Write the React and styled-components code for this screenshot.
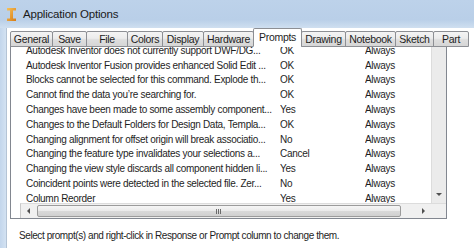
import React from 'react';
import styled, { createGlobalStyle } from 'styled-components';

const GlobalStyle = createGlobalStyle`
  html, body {
    margin: 0;
    padding: 0;
    background: #fff;
  }
`;

const Window = styled.div`
  width: 474px;
  height: 248px;
  overflow: hidden;
  display: flex;
  flex-direction: column;
  background: #fff;
  font-family: "Liberation Sans", Arial, sans-serif;
  color: #1e1e1e;
`;

const TitleBar = styled.div`
  flex: none;
  height: 28px;
  display: flex;
  align-items: center;
  gap: 7px;
  padding-left: 7px;
  background: linear-gradient(#bdd2ea, #b9cfe8 70%, #cfdff0);
  font-size: 11.5px;
  letter-spacing: -0.2px;
  color: #1a1a1a;
`;

const Body = styled.div`
  flex: 1;
  display: flex;
  min-height: 0;
`;

const Frame = styled.div`
  flex: none;
  width: 6px;
  background: linear-gradient(90deg, #c3d6ec, #d3e2f2);
  border-right: 1px solid #b4c4d6;
`;

const Content = styled.div`
  flex: 1;
  display: flex;
  flex-direction: column;
  padding: 1px 5px 0 3px;
  background: #fff;
  font-size: 10px;
  letter-spacing: -0.3px;
`;

const TabStrip = styled.div`
  display: flex;
  align-items: flex-end;
  height: 18px;
  position: relative;
  z-index: 1;
  margin-bottom: -1px;
`;

const Tab = styled.div`
  width: ${p => p.$w}px;
  height: ${p => (p.$active ? 19 : 16)}px;
  box-sizing: border-box;
  margin-right: -1px;
  display: flex;
  align-items: center;
  justify-content: center;
  border: 1px solid #8d8f94;
  border-bottom: ${p => (p.$active ? '1px solid #fff' : '1px solid #8d8f94')};
  border-radius: 2px 2px 0 0;
  background: ${p =>
    p.$active ? '#fff' : 'linear-gradient(#f4f4f4, #ececec 45%, #dedede 55%, #d6d6d6)'};
  padding-bottom: ${p => (p.$active ? 2 : 0)}px;
  font-size: 10.5px;
  white-space: nowrap;
`;

const ListBox = styled.div`
  display: grid;
  grid-template-columns: 1fr 15px;
  grid-template-rows: 156px 15px;
  width: 437px;
  box-sizing: border-box;
  border: 1px solid #828790;
  background: #fff;
`;

const Viewport = styled.div`
  overflow: hidden;
`;

const Rows = styled.div`
  margin-top: -4px;
`;

const Row = styled.div`
  display: grid;
  grid-template-columns: 269px 85px 1fr;
  height: 14.8px;
  align-items: center;
  white-space: nowrap;
`;

const Cell = styled.span`
  overflow: hidden;
  padding-left: ${p => p.$pad || 0}px;
`;

const VScroll = styled.div`
  display: flex;
  flex-direction: column;
  justify-content: flex-end;
  align-items: center;
  background: #ebebeb;
  border-left: 1px solid #dcdcdc;
  padding-bottom: 5px;
`;

const HScroll = styled.div`
  margin-left: 9px;
  display: flex;
  align-items: center;
  border-top: 1px solid #dcdcdc;
  border-left: 1px solid #c8c8c8;
  background: #f0f0f0;
`;

const ArrowButton = styled.div`
  flex: none;
  width: 15px;
  display: flex;
  align-items: center;
  justify-content: center;
`;

const Track = styled.div`
  flex: 1;
  display: flex;
  align-items: center;
`;

const Thumb = styled.div`
  width: 364px;
  height: 12px;
  margin-left: 1px;
  box-sizing: border-box;
  border: 1px solid #9b9b9b;
  border-radius: 2px;
  background: linear-gradient(#f6f6f6, #e9e9e9 50%, #d9d9d9 51%, #d0d0d0);
  display: flex;
  align-items: center;
  justify-content: center;
`;

const Corner = styled.div`
  background: #f0f0f0;
  border-top: 1px solid #dcdcdc;
`;

const Status = styled.div`
  margin: 11px 0 0 9px;
  font-size: 10px;
  letter-spacing: -0.42px;
  white-space: nowrap;
`;

const tabs = [
  ['General', 43],
  ['Save', 35],
  ['File', 42],
  ['Colors', 36],
  ['Display', 42],
  ['Hardware', 51],
  ['Prompts', 49],
  ['Drawing', 45],
  ['Notebook', 51],
  ['Sketch', 39],
  ['Part', 36],
];

const rows = [
  ['Autodesk Inventor does not currently support DWF/DG...', 'OK'],
  ['Autodesk Inventor Fusion provides enhanced Solid Edit ...', 'OK'],
  ['Blocks cannot be selected for this command. Explode th...', 'OK'],
  ['Cannot find the data you\u2019re searching for.', 'OK'],
  ['Changes have been made to some assembly component...', 'Yes'],
  ['Changes to the Default Folders for Design Data, Templa...', 'OK'],
  ['Changing alignment for offset origin will break associatio...', 'No'],
  ['Changing the feature type invalidates your selections a...', 'Cancel'],
  ['Changing the view style discards all component hidden li...', 'Yes'],
  ['Coincident points were detected in the selected file. Zer...', 'No'],
  ['Column Reorder', 'Yes'],
];

function AppIcon() {
  return (
    <svg width="9" height="13" viewBox="0 0 9 13">
      <defs>
        <linearGradient id="ig" x1="0" y1="0" x2="1" y2="1">
          <stop offset="0" stopColor="#f7c25a" />
          <stop offset="1" stopColor="#d77a12" />
        </linearGradient>
      </defs>
      <path d="M0 0h9v2.5H6v8h3V13H0v-2.5h3v-8H0z" fill="url(#ig)" />
    </svg>
  );
}

const Arrow = ({ dir }) => {
  const pts = {
    left: '4,0 4,6 1,3',
    right: '1,0 1,6 4,3',
    down: '0,1 6,1 3,4',
  }[dir];
  return (
    <svg width="6" height="6" viewBox="0 0 6 6">
      <polygon points={pts} fill="#505050" />
    </svg>
  );
};

export default function App() {
  return (
    <Window>
      <GlobalStyle />
      <TitleBar>
        <AppIcon />
        <span>Application Options</span>
      </TitleBar>
      <Body>
        <Frame />
        <Content>
          <TabStrip>
            {tabs.map(([name, w]) => (
              <Tab key={name} $w={w} $active={name === 'Prompts'}>
                {name}
              </Tab>
            ))}
          </TabStrip>
          <ListBox>
            <Viewport>
              <Rows>
                {rows.map(([text, resp]) => (
                  <Row key={text}>
                    <Cell $pad={15}>{text}</Cell>
                    <Cell>{resp}</Cell>
                    <Cell>Always</Cell>
                  </Row>
                ))}
              </Rows>
            </Viewport>
            <VScroll>
              <Arrow dir="down" />
            </VScroll>
            <HScroll>
              <ArrowButton>
                <Arrow dir="left" />
              </ArrowButton>
              <Track>
                <Thumb>
                  <svg width="6" height="5" viewBox="0 0 6 5">
                    <path d="M0.5 0v5M2.5 0v5M4.5 0v5" stroke="#6a6a6a" strokeWidth="1" />
                  </svg>
                </Thumb>
              </Track>
              <ArrowButton>
                <Arrow dir="right" />
              </ArrowButton>
            </HScroll>
            <Corner />
          </ListBox>
          <Status>Select prompt(s) and right-click in Response or Prompt column to change them.</Status>
        </Content>
      </Body>
    </Window>
  );
}
